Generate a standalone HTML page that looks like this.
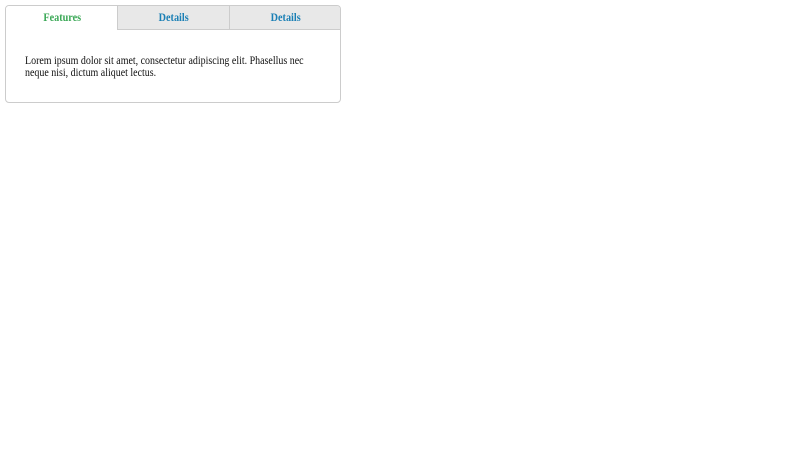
<!DOCTYPE html><html><head><style>
body{margin:0;background:#fff;font-family:"Liberation Serif",serif;}
.box{position:absolute;left:5px;top:5px;width:334px;height:96px;border:1px solid #ccc;border-radius:4px;overflow:hidden;}
.tab{position:absolute;top:0;height:24px;width:112px;line-height:23px;text-align:center;font-weight:bold;font-size:12px;color:#1a7fb5;background:#e8e8e8;border-bottom:1px solid #ccc;border-left:1px solid #ccc;box-sizing:border-box;}
.tab span{display:inline-block;transform:scaleX(0.85);}
.t1{left:0;background:#fff;color:#3aa856;border:none;}
.t2{left:111px}.t3{left:223px}
p{position:absolute;left:19px;top:48px;margin:0;font-size:12px;line-height:12px;width:340px;color:#111;transform:scaleX(0.83);transform-origin:0 0;}
</style></head><body><div class="box">
<div class="tab t1"><span>Features</span></div><div class="tab t2"><span>Details</span></div><div class="tab t3"><span>Details</span></div>
<p>Lorem ipsum dolor sit amet, consectetur adipiscing elit. Phasellus nec<br>neque nisi, dictum aliquet lectus.</p>
</div></body></html>
